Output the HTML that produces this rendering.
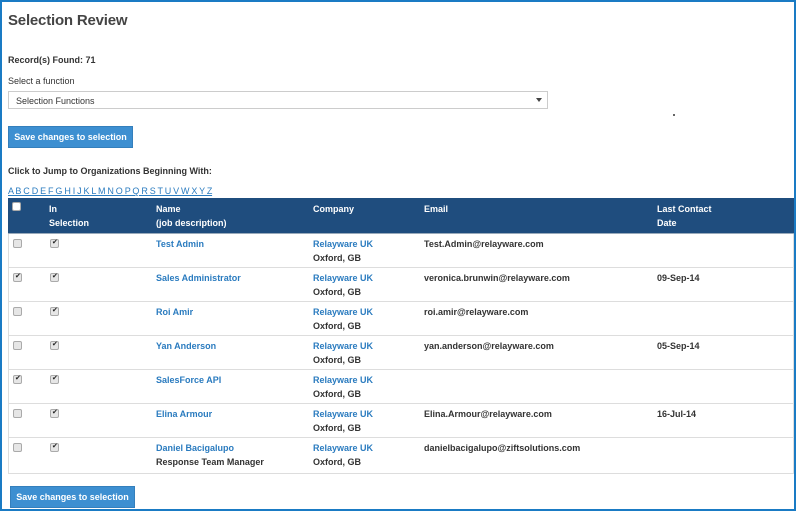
<!DOCTYPE html>
<html><head><meta charset="utf-8"><style>
*{margin:0;padding:0;box-sizing:border-box}
body{width:797px;height:511px;overflow:hidden;background:#fff;font-family:"Liberation Sans",sans-serif;font-size:9px;color:#333;position:relative}
.frame{position:absolute;left:0;top:0;width:796px;height:511px;border:2px solid #1a7bc4}
.a{position:absolute;white-space:nowrap}
h1{position:absolute;left:8px;top:12px;font-size:15px;font-weight:bold;color:#444;letter-spacing:-0.2px}
.sel{position:absolute;left:8px;top:91px;width:540px;height:18px;border:1px solid #ccc;padding:4px 7px;font-size:9px}
.sel:after{content:"";position:absolute;right:5px;top:6px;border-left:3px solid transparent;border-right:3px solid transparent;border-top:4px solid #444}
.btn{position:absolute;background:#3d8fd1;color:#fff;font-weight:bold;font-size:9px;text-align:center;line-height:20px;border:1px solid #347fbc}
.letters{position:absolute;left:8px;top:186px;color:#2a7bbf;text-decoration:underline;font-size:9px;letter-spacing:-0.3px}
.th{position:absolute;left:8px;top:198px;width:786px;height:36px;background:#1f4d7e;border-bottom:1px solid #9ab}
.th .a{color:#fff;font-weight:bold;line-height:14px;top:4px}
.row{position:absolute;left:8px;width:786px;height:34px;border-bottom:1px solid #ddd;border-left:1px solid #ddd;border-right:1px solid #ddd}
.row .a{top:3px;line-height:14px}
.l{color:#2a7bbf;font-weight:bold}
.cb{position:absolute;width:9px;height:9px;border:1px solid #aaa;border-radius:2px;background:#e6e6e6;top:5px}
.cb.c:after{content:"✔";position:absolute;left:1px;top:-2px;font-size:7px;color:#222}
b{font-weight:bold}
</style></head><body>
<div class="frame"></div>
<h1>Selection Review</h1>
<div class="a" style="left:8px;top:55px"><b>Record(s) Found: 71</b></div>
<div class="a" style="left:8px;top:76px">Select a function</div>
<div class="sel">Selection Functions</div>
<div class="a" style="left:673px;top:114px;width:2px;height:2px;background:#666"></div>
<div class="btn" style="left:8px;top:126px;width:125px">Save changes to selection</div>
<div class="a" style="left:8px;top:166px;font-weight:bold">Click to Jump to Organizations Beginning With:</div>
<div class="letters">A B C D E F G H I J K L M N O P Q R S T U V W X Y Z</div>
<div class="th">
<div class="cb" style="left:4px;top:4px;background:#fff"></div>
<div class="a" style="left:41px">In<br>Selection</div>
<div class="a" style="left:148px">Name<br>(job description)</div>
<div class="a" style="left:305px">Company</div>
<div class="a" style="left:416px">Email</div>
<div class="a" style="left:649px">Last Contact<br>Date</div>
</div>

<div class="row" style="top:234px"><div class="cb" style="left:4px"></div><div class="cb c" style="left:41px"></div>
<div class="a l" style="left:147px">Test Admin</div><div class="a" style="left:304px"><span class="l">Relayware UK</span><br><b>Oxford, GB</b></div>
<div class="a" style="left:415px"><b>Test.Admin@relayware.com</b></div></div>

<div class="row" style="top:268px"><div class="cb c" style="left:4px"></div><div class="cb c" style="left:41px"></div>
<div class="a l" style="left:147px">Sales Administrator</div><div class="a" style="left:304px"><span class="l">Relayware UK</span><br><b>Oxford, GB</b></div>
<div class="a" style="left:415px"><b>veronica.brunwin@relayware.com</b></div><div class="a" style="left:648px"><b>09-Sep-14</b></div></div>

<div class="row" style="top:302px"><div class="cb" style="left:4px"></div><div class="cb c" style="left:41px"></div>
<div class="a l" style="left:147px">Roi Amir</div><div class="a" style="left:304px"><span class="l">Relayware UK</span><br><b>Oxford, GB</b></div>
<div class="a" style="left:415px"><b>roi.amir@relayware.com</b></div></div>

<div class="row" style="top:336px"><div class="cb" style="left:4px"></div><div class="cb c" style="left:41px"></div>
<div class="a l" style="left:147px">Yan Anderson</div><div class="a" style="left:304px"><span class="l">Relayware UK</span><br><b>Oxford, GB</b></div>
<div class="a" style="left:415px"><b>yan.anderson@relayware.com</b></div><div class="a" style="left:648px"><b>05-Sep-14</b></div></div>

<div class="row" style="top:370px"><div class="cb c" style="left:4px"></div><div class="cb c" style="left:41px"></div>
<div class="a l" style="left:147px">SalesForce API</div><div class="a" style="left:304px"><span class="l">Relayware UK</span><br><b>Oxford, GB</b></div></div>

<div class="row" style="top:404px"><div class="cb" style="left:4px"></div><div class="cb c" style="left:41px"></div>
<div class="a l" style="left:147px">Elina Armour</div><div class="a" style="left:304px"><span class="l">Relayware UK</span><br><b>Oxford, GB</b></div>
<div class="a" style="left:415px"><b>Elina.Armour@relayware.com</b></div><div class="a" style="left:648px"><b>16-Jul-14</b></div></div>

<div class="row" style="top:438px;height:36px"><div class="cb" style="left:4px"></div><div class="cb c" style="left:41px"></div>
<div class="a" style="left:147px"><span class="l">Daniel Bacigalupo</span><br><b>Response Team Manager</b></div><div class="a" style="left:304px"><span class="l">Relayware UK</span><br><b>Oxford, GB</b></div>
<div class="a" style="left:415px"><b>danielbacigalupo@ziftsolutions.com</b></div></div>

<div class="btn" style="left:10px;top:486px;width:125px">Save changes to selection</div>
</body></html>
